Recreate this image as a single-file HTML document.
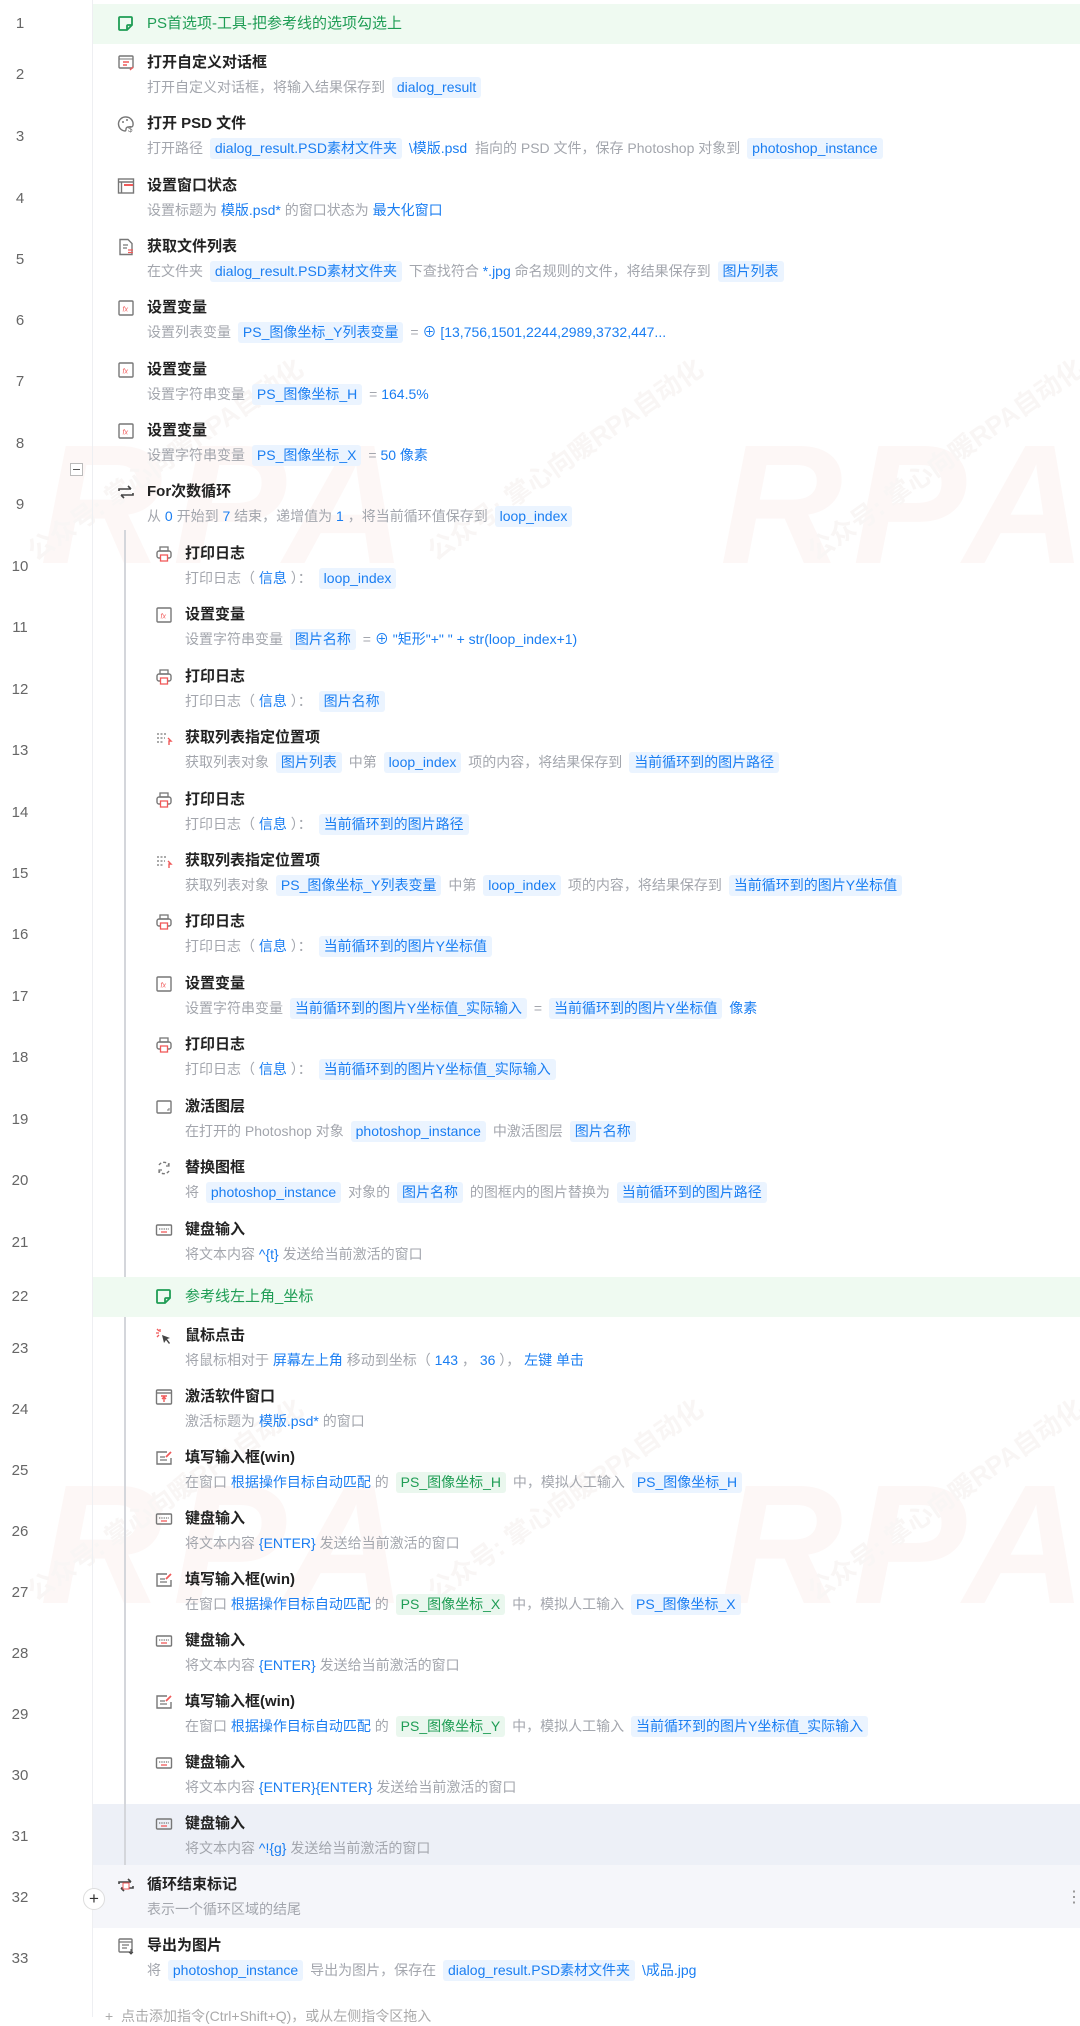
<!DOCTYPE html>
<html><head><meta charset="utf-8"><style>
*{margin:0;padding:0;box-sizing:border-box}
body{width:1080px;height:2017px;overflow:hidden;background:#fff;font-family:"Liberation Sans","Noto Sans CJK SC",sans-serif;position:relative}
.gut{position:absolute;left:92px;top:0;width:1px;height:2017px;background:#eeeff2}
.num{position:absolute;left:0;width:40px;text-align:center;font-size:15px;color:#666;line-height:20px}
.row{position:absolute;left:93px;right:0;height:61px}
.t{position:absolute;top:8px;font-size:15px;font-weight:bold;color:#222;line-height:20px;white-space:nowrap}
.d{position:absolute;top:31px;font-size:14px;color:#a3a6ad;line-height:22px;white-space:nowrap}
.ic{position:absolute;top:9px;width:18px;height:18px}
.c{background:#ebf4ff;color:#1a7ef2;padding:0 5px;border-radius:3px;display:inline-block;line-height:21px;margin:0 3px}
.g{background:#eaf7ee;color:#1f9d55;padding:0 5px;border-radius:3px;display:inline-block;line-height:21px;margin:0 3px}
.v{color:#1a7ef2}
.cm{position:absolute;left:93px;right:0;height:40px;background:#effaf1}
.cm span{position:absolute;top:10px;font-size:15px;color:#1f9d55;line-height:20px}
.wm{position:absolute;font-size:170px;font-weight:bold;font-style:italic;color:#fdf7f6;letter-spacing:10px;line-height:1}
.ws{position:absolute;font-size:26px;font-weight:bold;color:#f9f6f5;transform:rotate(-35deg);white-space:nowrap}
</style></head><body>
<div class="wm" style="left:40px;top:420px">RPA</div>
<div class="wm" style="left:720px;top:420px">RPA</div>
<div class="wm" style="left:40px;top:1460px">RPA</div>
<div class="wm" style="left:720px;top:1460px">RPA</div>
<div class="ws" style="left:0px;top:440px">公众号: 掌心向暖RPA自动化</div>
<div class="ws" style="left:400px;top:440px">公众号: 掌心向暖RPA自动化</div>
<div class="ws" style="left:780px;top:440px">公众号: 掌心向暖RPA自动化</div>
<div class="ws" style="left:0px;top:1480px">公众号: 掌心向暖RPA自动化</div>
<div class="ws" style="left:400px;top:1480px">公众号: 掌心向暖RPA自动化</div>
<div class="ws" style="left:780px;top:1480px">公众号: 掌心向暖RPA自动化</div>

<div class="gut"></div>
<div style="position:absolute;left:93px;top:1804px;right:0;height:61px;background:#edf0f7"></div>
<div style="position:absolute;left:93px;top:1865px;right:0;height:63px;background:#f5f6fa"></div>
<div style="position:absolute;left:124px;top:530px;width:2px;height:1335px;background:#d4d6db"></div>
<div style="position:absolute;left:70px;top:463px;width:13px;height:13px;border:1px solid #bbb;background:#fff"><div style="position:absolute;left:2px;top:5px;width:7px;height:1px;background:#555"></div></div>
<div style="position:absolute;left:83px;top:1888px;width:22px;height:22px;border:1px solid #ddd;border-radius:50%;background:#fff;text-align:center;line-height:20px;font-size:17px;color:#333">+</div>
<div style="position:absolute;left:1066px;top:1888px;font-size:16px;color:#888;line-height:20px">⋮</div>

<div class="cm" style="top:4px"><svg style="position:absolute;left:24px;top:11px" width="17" height="17" viewBox="0 0 17 17"><path d="M2 3a1 1 0 0 1 1-1h11a1 1 0 0 1 1 1v7l-5 5H3a1 1 0 0 1-1-1z M10 15v-4a1 1 0 0 1 1-1h4" fill="none" stroke="#1f9d55" stroke-width="1.8"/></svg><span style="left:54px">PS首选项-工具-把参考线的选项勾选上</span></div>
<div class="num" style="top:14px">1</div>

<div class="num" style="top:65px">2</div>
<div class="row" style="top:45px"><svg class="ic" style="left:24px" viewBox="0 0 18 18"><rect x="2" y="2" width="14" height="12" rx="1" fill="none" stroke="#777" stroke-width="1.4"/><path d="M2 5h14" stroke="#777"/><path d="M6 8h6M6 11h4" stroke="#f05a5a" stroke-width="1.4"/><path d="M13 16l3-3" stroke="#f05a5a" stroke-width="1.4"/></svg><div class="t" style="left:54px">打开自定义对话框</div><div class="d" style="left:54px">打开自定义对话框，将输入结果保存到 <span class="c">dialog_result</span></div></div>

<div class="num" style="top:127px">3</div>
<div class="row" style="top:106px"><svg class="ic" style="left:24px" viewBox="0 0 18 18"><path d="M9 2a7 7 0 0 0-1 14c1 0 1-1 1-2s1-2 2-2h3a2 2 0 0 0 2-2A7 7 0 0 0 9 2z" fill="none" stroke="#777" stroke-width="1.4"/><circle cx="6" cy="7" r="1" fill="#777"/><circle cx="10" cy="5" r="1" fill="#777"/><text x="11" y="17" font-size="8" fill="#777">$</text></svg><div class="t" style="left:54px">打开 PSD 文件</div><div class="d" style="left:54px">打开路径 <span class="c">dialog_result.PSD素材文件夹</span> <span class="v">\模版.psd</span>&nbsp; 指向的 PSD 文件，保存 Photoshop 对象到 <span class="c">photoshop_instance</span></div></div>

<div class="num" style="top:189px">4</div>
<div class="row" style="top:168px"><svg class="ic" style="left:24px" viewBox="0 0 18 18"><rect x="1.5" y="2" width="15" height="14" fill="none" stroke="#777" stroke-width="1.4"/><path d="M1.5 5h15M4.5 5v11" stroke="#777" stroke-width="1.4"/><path d="M7 8h9" stroke="#f05a5a" stroke-width="2"/></svg><div class="t" style="left:54px">设置窗口状态</div><div class="d" style="left:54px">设置标题为 <span class="v">模版.psd*</span> 的窗口状态为 <span class="v">最大化窗口</span></div></div>

<div class="num" style="top:250px">5</div>
<div class="row" style="top:229px"><svg class="ic" style="left:24px" viewBox="0 0 18 18"><path d="M3 1.5h8l4 4V16.5H3z" fill="none" stroke="#777" stroke-width="1.4"/><path d="M6 7h5M6 10h4" stroke="#777" stroke-width="1.3"/><path d="M11 12h5M11 14.5h5" stroke="#f05a5a" stroke-width="1.3"/></svg><div class="t" style="left:54px">获取文件列表</div><div class="d" style="left:54px">在文件夹 <span class="c">dialog_result.PSD素材文件夹</span> 下查找符合 <span class="v">*.jpg</span> 命名规则的文件，将结果保存到 <span class="c">图片列表</span></div></div>

<div class="num" style="top:311px">6</div>
<div class="row" style="top:290px"><svg class="ic" style="left:24px" viewBox="0 0 18 18"><rect x="2" y="2" width="14" height="14" rx="1" fill="none" stroke="#777" stroke-width="1.4"/><text x="5.5" y="12.5" font-size="7" font-style="italic" fill="#f05a5a">fx</text></svg><div class="t" style="left:54px">设置变量</div><div class="d" style="left:54px">设置列表变量 <span class="c">PS_图像坐标_Y列表变量</span> = <span class="v">⊕ [13,756,1501,2244,2989,3732,447...</span></div></div>

<div class="num" style="top:372px">7</div>
<div class="row" style="top:352px"><svg class="ic" style="left:24px" viewBox="0 0 18 18"><rect x="2" y="2" width="14" height="14" rx="1" fill="none" stroke="#777" stroke-width="1.4"/><text x="5.5" y="12.5" font-size="7" font-style="italic" fill="#f05a5a">fx</text></svg><div class="t" style="left:54px">设置变量</div><div class="d" style="left:54px">设置字符串变量 <span class="c">PS_图像坐标_H</span> = <span class="v">164.5%</span></div></div>

<div class="num" style="top:434px">8</div>
<div class="row" style="top:413px"><svg class="ic" style="left:24px" viewBox="0 0 18 18"><rect x="2" y="2" width="14" height="14" rx="1" fill="none" stroke="#777" stroke-width="1.4"/><text x="5.5" y="12.5" font-size="7" font-style="italic" fill="#f05a5a">fx</text></svg><div class="t" style="left:54px">设置变量</div><div class="d" style="left:54px">设置字符串变量 <span class="c">PS_图像坐标_X</span> = <span class="v">50 像素</span></div></div>

<div class="num" style="top:495px">9</div>
<div class="row" style="top:474px"><svg class="ic" style="left:24px" viewBox="0 0 18 18"><path d="M2 8V6h12M11 3l3 3M16 10v2H4M7 15l-3-3" fill="none" stroke="#444" stroke-width="1.6"/></svg><div class="t" style="left:54px">For次数循环</div><div class="d" style="left:54px">从 <span class="v">0</span> 开始到 <span class="v">7</span> 结束，递增值为 <span class="v">1</span> ，将当前循环值保存到 <span class="c">loop_index</span></div></div>

<div class="num" style="top:557px">10</div>
<div class="row" style="top:536px"><svg class="ic" style="left:62px" viewBox="0 0 18 18"><rect x="5" y="2" width="8" height="4" fill="none" stroke="#777" stroke-width="1.3"/><rect x="2" y="6" width="14" height="7" rx="2" fill="none" stroke="#777" stroke-width="1.4"/><rect x="5.5" y="10" width="7" height="6" fill="#fff" stroke="#f05a5a" stroke-width="1.3"/></svg><div class="t" style="left:92px">打印日志</div><div class="d" style="left:92px">打印日志（ <span class="v">信息</span> ）： <span class="c">loop_index</span></div></div>

<div class="num" style="top:618px">11</div>
<div class="row" style="top:597px"><svg class="ic" style="left:62px" viewBox="0 0 18 18"><rect x="2" y="2" width="14" height="14" rx="1" fill="none" stroke="#777" stroke-width="1.4"/><text x="5.5" y="12.5" font-size="7" font-style="italic" fill="#f05a5a">fx</text></svg><div class="t" style="left:92px">设置变量</div><div class="d" style="left:92px">设置字符串变量 <span class="c">图片名称</span> = <span class="v">⊕ "矩形"+" " + str(loop_index+1)</span></div></div>

<div class="num" style="top:680px">12</div>
<div class="row" style="top:659px"><svg class="ic" style="left:62px" viewBox="0 0 18 18"><rect x="5" y="2" width="8" height="4" fill="none" stroke="#777" stroke-width="1.3"/><rect x="2" y="6" width="14" height="7" rx="2" fill="none" stroke="#777" stroke-width="1.4"/><rect x="5.5" y="10" width="7" height="6" fill="#fff" stroke="#f05a5a" stroke-width="1.3"/></svg><div class="t" style="left:92px">打印日志</div><div class="d" style="left:92px">打印日志（ <span class="v">信息</span> ）： <span class="c">图片名称</span></div></div>

<div class="num" style="top:741px">13</div>
<div class="row" style="top:720px"><svg class="ic" style="left:62px" viewBox="0 0 18 18"><path d="M2 5h10M2 9h8M2 13h7" stroke="#777" stroke-width="1.3" stroke-dasharray="2 1.5"/><path d="M13 9l3 3h-2v4" stroke="#f05a5a" stroke-width="1.4" fill="none"/></svg><div class="t" style="left:92px">获取列表指定位置项</div><div class="d" style="left:92px">获取列表对象 <span class="c">图片列表</span> 中第 <span class="c">loop_index</span> 项的内容，将结果保存到 <span class="c">当前循环到的图片路径</span></div></div>

<div class="num" style="top:803px">14</div>
<div class="row" style="top:782px"><svg class="ic" style="left:62px" viewBox="0 0 18 18"><rect x="5" y="2" width="8" height="4" fill="none" stroke="#777" stroke-width="1.3"/><rect x="2" y="6" width="14" height="7" rx="2" fill="none" stroke="#777" stroke-width="1.4"/><rect x="5.5" y="10" width="7" height="6" fill="#fff" stroke="#f05a5a" stroke-width="1.3"/></svg><div class="t" style="left:92px">打印日志</div><div class="d" style="left:92px">打印日志（ <span class="v">信息</span> ）： <span class="c">当前循环到的图片路径</span></div></div>

<div class="num" style="top:864px">15</div>
<div class="row" style="top:843px"><svg class="ic" style="left:62px" viewBox="0 0 18 18"><path d="M2 5h10M2 9h8M2 13h7" stroke="#777" stroke-width="1.3" stroke-dasharray="2 1.5"/><path d="M13 9l3 3h-2v4" stroke="#f05a5a" stroke-width="1.4" fill="none"/></svg><div class="t" style="left:92px">获取列表指定位置项</div><div class="d" style="left:92px">获取列表对象 <span class="c">PS_图像坐标_Y列表变量</span> 中第 <span class="c">loop_index</span> 项的内容，将结果保存到 <span class="c">当前循环到的图片Y坐标值</span></div></div>

<div class="num" style="top:925px">16</div>
<div class="row" style="top:904px"><svg class="ic" style="left:62px" viewBox="0 0 18 18"><rect x="5" y="2" width="8" height="4" fill="none" stroke="#777" stroke-width="1.3"/><rect x="2" y="6" width="14" height="7" rx="2" fill="none" stroke="#777" stroke-width="1.4"/><rect x="5.5" y="10" width="7" height="6" fill="#fff" stroke="#f05a5a" stroke-width="1.3"/></svg><div class="t" style="left:92px">打印日志</div><div class="d" style="left:92px">打印日志（ <span class="v">信息</span> ）： <span class="c">当前循环到的图片Y坐标值</span></div></div>

<div class="num" style="top:987px">17</div>
<div class="row" style="top:966px"><svg class="ic" style="left:62px" viewBox="0 0 18 18"><rect x="2" y="2" width="14" height="14" rx="1" fill="none" stroke="#777" stroke-width="1.4"/><text x="5.5" y="12.5" font-size="7" font-style="italic" fill="#f05a5a">fx</text></svg><div class="t" style="left:92px">设置变量</div><div class="d" style="left:92px">设置字符串变量 <span class="c">当前循环到的图片Y坐标值_实际输入</span> = <span class="c">当前循环到的图片Y坐标值</span> <span class="v">像素</span></div></div>

<div class="num" style="top:1048px">18</div>
<div class="row" style="top:1027px"><svg class="ic" style="left:62px" viewBox="0 0 18 18"><rect x="5" y="2" width="8" height="4" fill="none" stroke="#777" stroke-width="1.3"/><rect x="2" y="6" width="14" height="7" rx="2" fill="none" stroke="#777" stroke-width="1.4"/><rect x="5.5" y="10" width="7" height="6" fill="#fff" stroke="#f05a5a" stroke-width="1.3"/></svg><div class="t" style="left:92px">打印日志</div><div class="d" style="left:92px">打印日志（ <span class="v">信息</span> ）： <span class="c">当前循环到的图片Y坐标值_实际输入</span></div></div>

<div class="num" style="top:1110px">19</div>
<div class="row" style="top:1089px"><svg class="ic" style="left:62px" viewBox="0 0 18 18"><rect x="2" y="3" width="14" height="12" rx="1" fill="none" stroke="#777" stroke-width="1.4"/><path d="M12 12h2v-2" stroke="#777" fill="none"/></svg><div class="t" style="left:92px">激活图层</div><div class="d" style="left:92px">在打开的 Photoshop 对象 <span class="c">photoshop_instance</span> 中激活图层 <span class="c">图片名称</span></div></div>

<div class="num" style="top:1171px">20</div>
<div class="row" style="top:1150px"><svg class="ic" style="left:62px" viewBox="0 0 18 18"><path d="M4 6a6 6 0 0 1 10 0M14 12a6 6 0 0 1-10 0" fill="none" stroke="#777" stroke-width="1.4" stroke-dasharray="3 2"/><path d="M14 4v3h-3M4 14v-3h3" fill="none" stroke="#777" stroke-width="1.2"/></svg><div class="t" style="left:92px">替换图框</div><div class="d" style="left:92px">将 <span class="c">photoshop_instance</span> 对象的 <span class="c">图片名称</span> 的图框内的图片替换为 <span class="c">当前循环到的图片路径</span></div></div>

<div class="num" style="top:1233px">21</div>
<div class="row" style="top:1212px"><svg class="ic" style="left:62px" viewBox="0 0 18 18"><rect x="1.5" y="4" width="15" height="10" rx="1" fill="none" stroke="#777" stroke-width="1.4"/><path d="M4 8h10" stroke="#777" stroke-width="1.2" stroke-dasharray="1.3 1"/><path d="M6 11h6" stroke="#f05a5a" stroke-width="1.3"/></svg><div class="t" style="left:92px">键盘输入</div><div class="d" style="left:92px">将文本内容 <span class="v">^{t}</span> 发送给当前激活的窗口</div></div>

<div class="cm" style="top:1277px"><svg style="position:absolute;left:62px;top:11px" width="17" height="17" viewBox="0 0 17 17"><path d="M2 3a1 1 0 0 1 1-1h11a1 1 0 0 1 1 1v7l-5 5H3a1 1 0 0 1-1-1z M10 15v-4a1 1 0 0 1 1-1h4" fill="none" stroke="#1f9d55" stroke-width="1.8"/></svg><span style="left:92px">参考线左上角_坐标</span></div>
<div class="num" style="top:1287px">22</div>

<div class="num" style="top:1339px">23</div>
<div class="row" style="top:1318px"><svg class="ic" style="left:62px" viewBox="0 0 18 18"><path d="M7 8l8 3-3 1 3 4-1 1-3-4-2 3z" fill="#444"/><path d="M5 2v3M1 6h3M2 2l2 2M2 10l2-2" stroke="#f05a5a" stroke-width="1.3"/></svg><div class="t" style="left:92px">鼠标点击</div><div class="d" style="left:92px">将鼠标相对于 <span class="v">屏幕左上角</span> 移动到坐标（ <span class="v">143</span> ， <span class="v">36</span> ）， <span class="v">左键</span> <span class="v">单击</span></div></div>

<div class="num" style="top:1400px">24</div>
<div class="row" style="top:1379px"><svg class="ic" style="left:62px" viewBox="0 0 18 18"><rect x="1.5" y="2" width="15" height="14" rx="1" fill="none" stroke="#777" stroke-width="1.4"/><path d="M1.5 5h15" stroke="#777" stroke-width="1.4"/><path d="M6 8h6M9 9v5M7 11l2-2 2 2" stroke="#f05a5a" stroke-width="1.4" fill="none"/></svg><div class="t" style="left:92px">激活软件窗口</div><div class="d" style="left:92px">激活标题为 <span class="v">模版.psd*</span> 的窗口</div></div>

<div class="num" style="top:1461px">25</div>
<div class="row" style="top:1440px"><svg class="ic" style="left:62px" viewBox="0 0 18 18"><path d="M12 3H2v12h14V9" fill="none" stroke="#777" stroke-width="1.4"/><path d="M5 8h5M5 11h7" stroke="#777" stroke-width="1.3"/><path d="M11 8l5-5" stroke="#f05a5a" stroke-width="1.8"/></svg><div class="t" style="left:92px">填写输入框(win)</div><div class="d" style="left:92px">在窗口 <span class="v">根据操作目标自动匹配</span> 的 <span class="g">PS_图像坐标_H</span> 中，模拟人工输入 <span class="c">PS_图像坐标_H</span></div></div>

<div class="num" style="top:1522px">26</div>
<div class="row" style="top:1501px"><svg class="ic" style="left:62px" viewBox="0 0 18 18"><rect x="1.5" y="4" width="15" height="10" rx="1" fill="none" stroke="#777" stroke-width="1.4"/><path d="M4 8h10" stroke="#777" stroke-width="1.2" stroke-dasharray="1.3 1"/><path d="M6 11h6" stroke="#f05a5a" stroke-width="1.3"/></svg><div class="t" style="left:92px">键盘输入</div><div class="d" style="left:92px">将文本内容 <span class="v">{ENTER}</span> 发送给当前激活的窗口</div></div>

<div class="num" style="top:1583px">27</div>
<div class="row" style="top:1562px"><svg class="ic" style="left:62px" viewBox="0 0 18 18"><path d="M12 3H2v12h14V9" fill="none" stroke="#777" stroke-width="1.4"/><path d="M5 8h5M5 11h7" stroke="#777" stroke-width="1.3"/><path d="M11 8l5-5" stroke="#f05a5a" stroke-width="1.8"/></svg><div class="t" style="left:92px">填写输入框(win)</div><div class="d" style="left:92px">在窗口 <span class="v">根据操作目标自动匹配</span> 的 <span class="g">PS_图像坐标_X</span> 中，模拟人工输入 <span class="c">PS_图像坐标_X</span></div></div>

<div class="num" style="top:1644px">28</div>
<div class="row" style="top:1623px"><svg class="ic" style="left:62px" viewBox="0 0 18 18"><rect x="1.5" y="4" width="15" height="10" rx="1" fill="none" stroke="#777" stroke-width="1.4"/><path d="M4 8h10" stroke="#777" stroke-width="1.2" stroke-dasharray="1.3 1"/><path d="M6 11h6" stroke="#f05a5a" stroke-width="1.3"/></svg><div class="t" style="left:92px">键盘输入</div><div class="d" style="left:92px">将文本内容 <span class="v">{ENTER}</span> 发送给当前激活的窗口</div></div>

<div class="num" style="top:1705px">29</div>
<div class="row" style="top:1684px"><svg class="ic" style="left:62px" viewBox="0 0 18 18"><path d="M12 3H2v12h14V9" fill="none" stroke="#777" stroke-width="1.4"/><path d="M5 8h5M5 11h7" stroke="#777" stroke-width="1.3"/><path d="M11 8l5-5" stroke="#f05a5a" stroke-width="1.8"/></svg><div class="t" style="left:92px">填写输入框(win)</div><div class="d" style="left:92px">在窗口 <span class="v">根据操作目标自动匹配</span> 的 <span class="g">PS_图像坐标_Y</span> 中，模拟人工输入 <span class="c">当前循环到的图片Y坐标值_实际输入</span></div></div>

<div class="num" style="top:1766px">30</div>
<div class="row" style="top:1745px"><svg class="ic" style="left:62px" viewBox="0 0 18 18"><rect x="1.5" y="4" width="15" height="10" rx="1" fill="none" stroke="#777" stroke-width="1.4"/><path d="M4 8h10" stroke="#777" stroke-width="1.2" stroke-dasharray="1.3 1"/><path d="M6 11h6" stroke="#f05a5a" stroke-width="1.3"/></svg><div class="t" style="left:92px">键盘输入</div><div class="d" style="left:92px">将文本内容 <span class="v">{ENTER}{ENTER}</span> 发送给当前激活的窗口</div></div>

<div class="num" style="top:1827px">31</div>
<div class="row" style="top:1806px"><svg class="ic" style="left:62px" viewBox="0 0 18 18"><rect x="1.5" y="4" width="15" height="10" rx="1" fill="none" stroke="#777" stroke-width="1.4"/><path d="M4 8h10" stroke="#777" stroke-width="1.2" stroke-dasharray="1.3 1"/><path d="M6 11h6" stroke="#f05a5a" stroke-width="1.3"/></svg><div class="t" style="left:92px">键盘输入</div><div class="d" style="left:92px">将文本内容 <span class="v">^!{g}</span> 发送给当前激活的窗口</div></div>

<div class="num" style="top:1888px">32</div>
<div class="row" style="top:1867px"><svg class="ic" style="left:24px" viewBox="0 0 18 18"><path d="M2 8V6h12M11 3l3 3M16 10v2H4M7 15l-3-3" fill="none" stroke="#444" stroke-width="1.6"/><rect x="6" y="7" width="6" height="6" fill="#fff" stroke="#f05a5a"/></svg><div class="t" style="left:54px">循环结束标记</div><div class="d" style="left:54px">表示一个循环区域的结尾</div></div>

<div class="num" style="top:1949px">33</div>
<div class="row" style="top:1928px"><svg class="ic" style="left:24px" viewBox="0 0 18 18"><rect x="2" y="2" width="13" height="13" rx="1" fill="none" stroke="#777" stroke-width="1.4"/><path d="M2 5h13M5 8h7M5 11h5" stroke="#777" stroke-width="1.3"/><path d="M14 12v5M12 15l2 2 2-2" stroke="#444" fill="none"/></svg><div class="t" style="left:54px">导出为图片</div><div class="d" style="left:54px">将 <span class="c">photoshop_instance</span> 导出为图片，保存在 <span class="c">dialog_result.PSD素材文件夹</span> <span class="v">\成品.jpg</span></div></div>

<div style="position:absolute;left:105px;top:2006px;font-size:14px;color:#aaa;line-height:20px;white-space:nowrap">+&nbsp;&nbsp;点击添加指令(Ctrl+Shift+Q)，或从左侧指令区拖入</div>
</body></html>
